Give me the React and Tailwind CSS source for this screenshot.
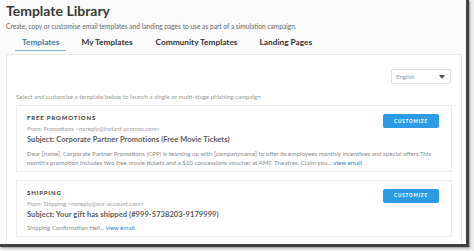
import React from "react";

const cards = [
  {
    title: "FREE PROMOTIONS",
    from: "From: Promotions <noreply@instant-promos.com>",
    subject: "Subject: Corporate Partner Promotions (Free Movie Tickets)",
    body: [
      "Dear [name], Corporate Partner Promotions (CPP) is teaming up with [companyname] to offer its employees monthly incentives and special offers.This",
      "month's promotion includes two free movie tickets and a $10 concessions voucher at AMC Theatres. Claim you...",
    ],
  },
  {
    title: "SHIPPING",
    from: "From: Shipping <noreply@our-account.com>",
    subject: "Subject: Your gift has shipped (#999-5738203-9179999)",
    body: ["Shipping Confirmation Hell..."],
  },
];

const tabs = ["Templates", "My Templates", "Community Templates", "Landing Pages"];
const tabGap = ["", "ml-[15px]", "ml-[23px]", "ml-[22px]"];

const Card = ({ card, last }) => {
  return (
    <div className={`border border-[#ececec] bg-white pl-[10px] pr-[12px] pt-[8px] pb-[4px] ${last ? "" : "mb-[8px]"}`}>
      <div className="flex items-start justify-between">
        <div className="text-[6px] font-bold tracking-[0.14em] text-[#333] leading-[8px]">{card.title}</div>
        <button className="w-[56px] h-[14px] rounded-[2px] bg-[#2b9be3] text-white text-[4.6px] font-bold tracking-[0.18em]">
          CUSTOMIZE
        </button>
      </div>
      <div className="-mt-[3px] text-[6px] text-[#a0a0a0] leading-[8px]">{card.from}</div>
      <div className="mt-[1px] text-[7.5px] font-bold text-[#5a5a5a] leading-[11px] tracking-[0.01em]">{card.subject}</div>
      <div className="mt-[3.5px] text-[6.2px] text-[#8a8a8a] leading-[9px]">
        {card.body.map((line, i) => (
          <div key={i} className="whitespace-nowrap">
            {line}
            {i === card.body.length - 1 && <span className="text-[#2b7fc6]"> view email</span>}
          </div>
        ))}
      </div>
    </div>
  );
};

export default function App() {
  return (
    <div className="w-[474px] h-[251px] bg-[#efefef] overflow-hidden" style={{ fontFamily: "Lato, 'Open Sans', sans-serif" }}>
      <div className="w-[469px] h-[247px] bg-[#fbfbfb] border-r-[3px] border-b-[3px] border-[#404040] overflow-hidden shadow-[1px_1px_2px_rgba(0,0,0,0.4)]">
        <div className="pl-[6px] pr-[4px]">
          <h1 className="pt-[1px] text-[14px] font-bold text-[#3a3a3a] leading-[20px]">Template Library</h1>
          <p className="text-[6.6px] text-[#666] leading-[10px]">
            Create, copy or customise email templates and landing pages to use as part of a simulation campaign.
          </p>
          <div className="mt-[4px] flex pl-[9px] h-[16px]">
            {tabs.map((t, i) => (
              <div
                key={t}
                className={`h-[16px] text-[8.3px] font-bold leading-[14px] ${
                  i === 0 ? "px-[7px] text-[#3f7ea8] border-b-[1.5px] border-[#7fb1d3]" : "text-[#333]"
                } ${tabGap[i]}`}
              >
                {t}
              </div>
            ))}
          </div>
          <div className="mt-[3px] w-[456px] h-[200px] bg-white border border-[#e8e8e8] px-[9px]">
            <div className="flex justify-end pt-[14px] pr-[1px]">
              <div className="w-[60px] h-[15px] border border-[#e2e2e2] rounded-[2px] flex items-center justify-between pl-[4px] pr-[5px]">
                <span className="text-[6px] text-[#999]">English</span>
                <svg width="6" height="4" viewBox="0 0 6 4">
                  <path d="M0 0 L6 0 L3 4 Z" fill="#555" />
                </svg>
              </div>
            </div>
            <p className="mt-[8px] text-[6.2px] text-[#999] leading-[9px]">
              Select and customize a template below to launch a single or multi-stage phishing campaign
            </p>
            <div className="mt-[4px]">
              {cards.map((c, i) => (
                <Card key={c.title} card={c} last={i === cards.length - 1} />
              ))}
            </div>
          </div>
        </div>
      </div>
    </div>
  );
}
